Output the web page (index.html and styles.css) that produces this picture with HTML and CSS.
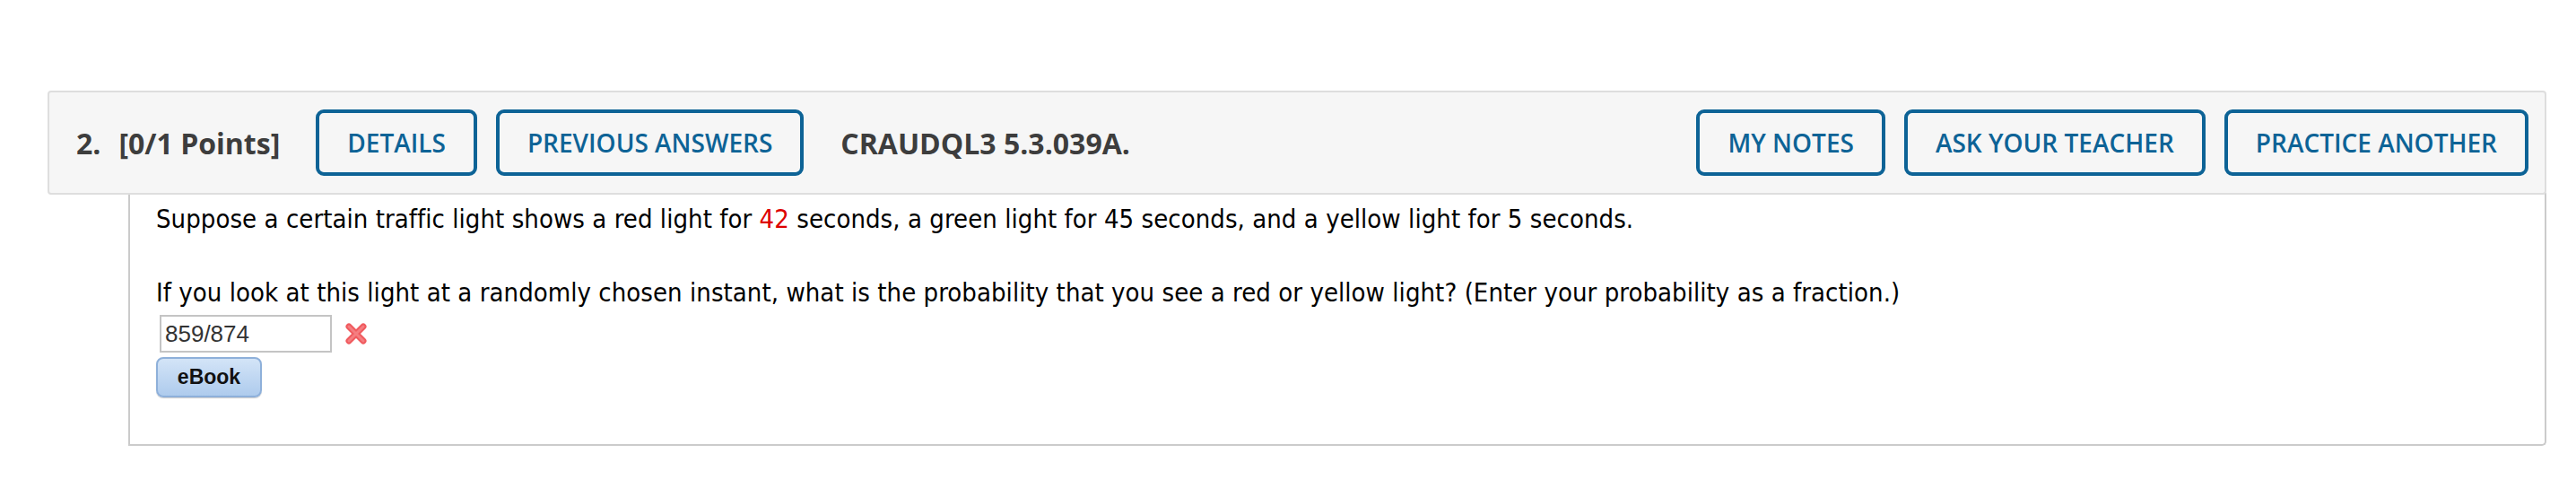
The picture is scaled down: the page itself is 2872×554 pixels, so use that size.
FILE: index.html
```html
<!DOCTYPE html>
<html lang="en">
<head>
	<meta charset="UTF-8">
	<title>Question 2</title>
	<link rel="stylesheet" href="styles.css">
</head>
<body>
	<div class="question">
		<div class="question-head">
			<span class="q-num">2.</span>
			<span class="q-points">[0/1 Points]</span>
			<button class="head-btn">DETAILS</button>
			<button class="head-btn">PREVIOUS ANSWERS</button>
			<span class="q-code">CRAUDQL3 5.3.039A.</span>
			<div class="head-right">
				<button class="head-btn">MY NOTES</button>
				<button class="head-btn">ASK YOUR TEACHER</button>
				<button class="head-btn">PRACTICE ANOTHER</button>
			</div>
		</div>
		<div class="question-body">
			<p class="q-text">Suppose a certain traffic light shows a red light for <span class="red">42</span> seconds, a green light for 45 seconds, and a yellow light for 5 seconds.</p>
			<p class="q-text q-ask">If you look at this light at a randomly chosen instant, what is the probability that you see a red or yellow light? (Enter your probability as a fraction.)</p>
			<div class="answer-row">
				<input class="answer" type="text" value="859/874">
				<svg class="wrong" width="26" height="26" viewBox="0 0 26 26">
					<path d="M5 5 L21 21 M21 5 L5 21" stroke="#f05a5e" stroke-width="7" stroke-linecap="round"/>
					<path d="M5 5 L21 21 M21 5 L5 21" stroke="#f57d80" stroke-width="3" stroke-linecap="round"/>
				</svg>
			</div>
			<button class="ebook">eBook</button>
		</div>
	</div>
</body>
</html>
```

FILE: styles.css
```css
body {
	margin: 0;
	background: #fff;
}
.question {
	padding: 101px 33px 0 53px;
}
.question-head {
	display: flex;
	align-items: center;
	height: 112px;
	padding: 0 18px 0 30px;
	background: #f6f6f6;
	border: 2px solid #dedede;
	border-radius: 4px;
	font-family: "Open Sans", sans-serif;
	position: relative;
	z-index: 1;
}
.q-num {
	font-size: 32px;
	font-weight: 700;
	color: #3d3d3d;
	margin-right: 20px;
}
.q-points {
	font-size: 32px;
	font-weight: 700;
	color: #3d3d3d;
	margin-right: 40px;
}
.q-code {
	font-size: 32px;
	font-weight: 700;
	color: #3d3d3d;
	margin-left: 20px;
}
.head-btn {
	height: 74px;
	padding: 0 31px;
	margin-right: 21px;
	background: #f6f6f6;
	border: 4px solid #0d6396;
	border-radius: 9px;
	font-family: "Open Sans", sans-serif;
	font-size: 28px;
	font-weight: 600;
	color: #0d6396;
}
.head-right {
	margin-left: auto;
	display: flex;
}
.head-right .head-btn:last-child {
	margin-right: 0;
}
.question-body {
	margin: -2px 0 0 90px;
	padding: 9px 29px 52px 29px;
	border: 2px solid #cbcbcb;
	border-top: none;
	border-radius: 0 0 5px 0;
	font-family: "DejaVu Sans Condensed", "DejaVu Sans", sans-serif;
	font-size: 29px;
	letter-spacing: 0.05px;
	color: #000;
}
.q-text {
	margin: 0;
	line-height: 40px;
}
.q-ask {
	margin-top: 42px;
}
.red {
	color: #dd0000;
}
.answer-row {
	display: flex;
	align-items: center;
	margin-top: 5px;
}
.answer {
	width: 192px;
	height: 42px;
	box-sizing: border-box;
	margin: 0 0 0 4px;
	padding: 0 4px;
	border: 2px solid #c4c4c4;
	font-family: "Liberation Sans", Arial, sans-serif;
	font-size: 26px;
	color: #333;
}
.wrong {
	margin-left: 14px;
}
.ebook {
	display: block;
	margin-top: 5px;
	width: 118px;
	height: 45px;
	padding: 0;
	border: 2px solid #8eb0da;
	border-radius: 8px;
	background: linear-gradient(#d3e4f7, #aecbed);
	box-shadow: 0 1px 1px rgba(0,0,0,0.2);
	font-family: "Liberation Sans", Arial, sans-serif;
	font-size: 23px;
	font-weight: 700;
	color: #111;
}
```
